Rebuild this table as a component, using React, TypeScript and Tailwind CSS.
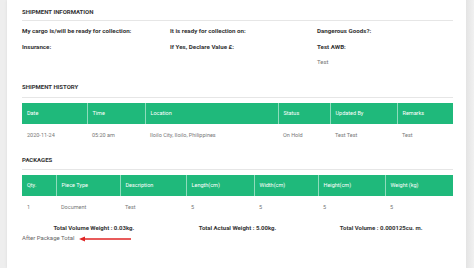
import React from "react"

const history = {
  cols: [
    { label: "Date", w: 65 },
    { label: "Time", w: 58 },
    { label: "Location", w: 133 },
    { label: "Status", w: 52 },
    { label: "Updated By", w: 67 },
    { label: "Remarks", w: 56 },
  ],
  rows: [["2020-11-24", "05:20 am", "Iloilo City, Iloilo, Philippines", "On Hold", "Test Test", "Test"]],
}

const packages = {
  cols: [
    { label: "Qty.", w: 34 },
    { label: "Piece Type", w: 64 },
    { label: "Description", w: 66 },
    { label: "Length(cm)", w: 68 },
    { label: "Width(cm)", w: 64 },
    { label: "Height(cm)", w: 67 },
    { label: "Weight (kg)", w: 68 },
  ],
  rows: [["1", "Document", "Test", "5", "5", "5", "5"]],
}

function SectionTitle({ children, className }: { children: React.ReactNode; className?: string }) {
  return (
    <div className={className}>
      <div className="h-[8px] leading-[8px] text-[6px] font-bold uppercase text-[#333]">{children}</div>
    </div>
  )
}

function DataTable({ data }: { data: typeof history }) {
  return (
    <table className="w-[431px] table-fixed border-collapse">
      <colgroup>
        {data.cols.map((c) => (
          <col key={c.label} style={{ width: c.w }} />
        ))}
      </colgroup>
      <thead>
        <tr className="h-[21px] bg-[#1fb97b]">
          {data.cols.map((c, i) => (
            <th
              key={c.label}
              className={
                "px-[5px] text-left align-middle text-[5.5px] font-normal text-white " +
                (i < data.cols.length - 1 ? "border-r border-[#8fdcbc]" : "")
              }
            >
              {c.label}
            </th>
          ))}
        </tr>
      </thead>
      <tbody>
        {data.rows.map((r, ri) => (
          <tr key={ri} className="h-[22px]">
            {r.map((v, i) => (
              <td key={i} className="px-[5px] align-middle text-[5.5px] text-[#777]">
                {v}
              </td>
            ))}
          </tr>
        ))}
      </tbody>
    </table>
  )
}

export default function App() {
  return (
    <div className="flex h-[268px] w-[474px] overflow-hidden bg-[#eeeeee]" style={{ fontFamily: "Roboto, 'Liberation Sans', sans-serif" }}>
      <div className="ml-[7px] w-[459px] bg-white pl-[15px] pr-[13px] shadow-[0_0_3px_rgba(0,0,0,0.08)]">
        {/* Shipment information */}
        <SectionTitle className="pt-[8px]">Shipment Information</SectionTitle>
        <div className="mt-[4px] border-t border-[#e6e6e6]" />
        <div className="mt-[6px] grid grid-cols-[148px_147px_1fr] gap-y-[8px] text-[6.2px] leading-[8px] font-bold text-[#333]">
          <div>My cargo is/will be ready for collection:</div>
          <div>It is ready for collection on:</div>
          <div>Dangerous Goods?:</div>
          <div>Insurance:</div>
          <div>If Yes, Declare Value £:</div>
          <div>Test AWB:</div>
        </div>
        <div className="mt-[7px] grid grid-cols-[148px_147px_1fr] text-[6px] leading-[8px] text-[#777]">
          <div />
          <div />
          <div>Test</div>
        </div>

        {/* Shipment history */}
        <SectionTitle className="mt-[17px]">Shipment History</SectionTitle>
        <div className="mt-[6px] border-t border-[#e6e6e6]" />
        <div className="mt-[5px]">
          <DataTable data={history} />
        </div>

        {/* Packages */}
        <SectionTitle className="mt-[10px]">Packages</SectionTitle>
        <div className="mt-[5px] border-t border-[#e6e6e6]" />
        <div className="mt-[5px]">
          <DataTable data={packages} />
        </div>

        <div className="mt-[6px] grid w-[431px] grid-cols-3 text-center text-[6px] leading-[8px] font-bold text-[#333]">
          <div>Total Volume Weight : 0.03kg.</div>
          <div>Total Actual Weight : 5.00kg.</div>
          <div>Total Volume : 0.000125cu. m.</div>
        </div>
        <div className="mt-[2px] flex items-center text-[6px] leading-[8px] text-[#666]">
          <span>After Package Total</span>
          <svg width="53" height="6" viewBox="0 0 53 6" className="ml-[5px] mt-[1px]">
            <line x1="4" y1="3" x2="52" y2="3" stroke="#e02424" strokeWidth="1.3" />
            <polygon points="0,3 6,0.5 6,5.5" fill="#e02424" />
          </svg>
        </div>
      </div>
      <div className="w-[8px] bg-gradient-to-r from-[#e4e4e4] to-[#f1f1f1]" />
    </div>
  )
}
